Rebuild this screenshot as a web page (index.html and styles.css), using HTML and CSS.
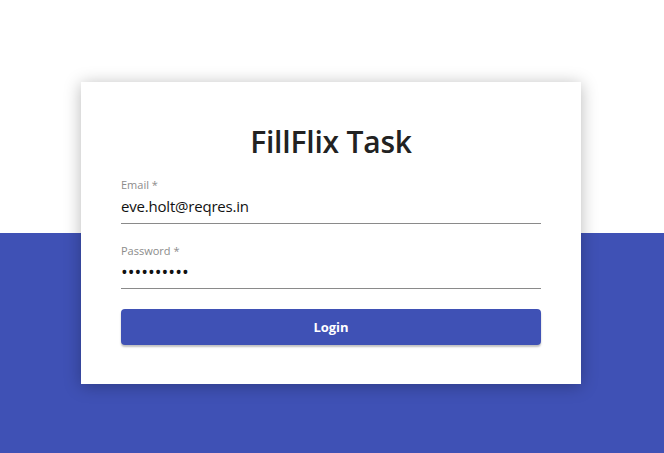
FILE: index.html
```html
<!DOCTYPE html>
<html>
<head>
<meta charset="utf-8">
<link rel="stylesheet" href="styles.css">
</head>
<body>
<div class="page">
  <div class="top"></div>
  <div class="bottom"></div>
  <div class="card">
    <h1 class="title">FillFlix Task</h1>
    <div class="field">
      <label class="label">Email *</label>
      <div class="value">eve.holt@reqres.in</div>
    </div>
    <div class="field">
      <label class="label">Password *</label>
      <div class="value dots">••••••••••</div>
    </div>
    <button class="btn">Login</button>
  </div>
</div>
</body>
</html>
```
FILE: styles.css
```css
html, body { margin: 0; padding: 0; }
body { font-family: "Open Sans", "Noto Sans", sans-serif; width: 664px; height: 453px; overflow: hidden; }
.page { position: relative; width: 664px; height: 453px; display: flex; flex-direction: column; }
.top { height: 233px; background: #fff; }
.bottom { flex: 1; background: #3f51b5; }
.card {
  position: absolute; left: 81px; top: 82px; width: 500px; box-sizing: border-box;
  background: #fff; padding: 38px 40px 39px;
  box-shadow: 0 2px 16px rgba(0,0,0,0.28);
  display: flex; flex-direction: column;
}
.title { margin: 0 0 14px; text-align: center; font-size: 30px; font-weight: 600; color: #222; line-height: 44px; letter-spacing: -0.2px; }
.field { display: flex; flex-direction: column; border-bottom: 1px solid #8a8a8a; margin-bottom: 20px; }
.label { font-size: 11px; color: #8c8c8c; line-height: 14px; }
.value { font-size: 15px; color: #111; line-height: 28px; padding-bottom: 3px; letter-spacing: -0.2px; }
.dots { font-size: 18px; letter-spacing: 0; line-height: 29px; padding-bottom: 1px; }
.btn {
  height: 36px; border: none; border-radius: 4px; background: #3f51b5; color: #fff;
  font-family: inherit; font-weight: 700; font-size: 13px;
  box-shadow: 0 2px 2px rgba(0,0,0,0.25); margin-top: 0;
}
```
